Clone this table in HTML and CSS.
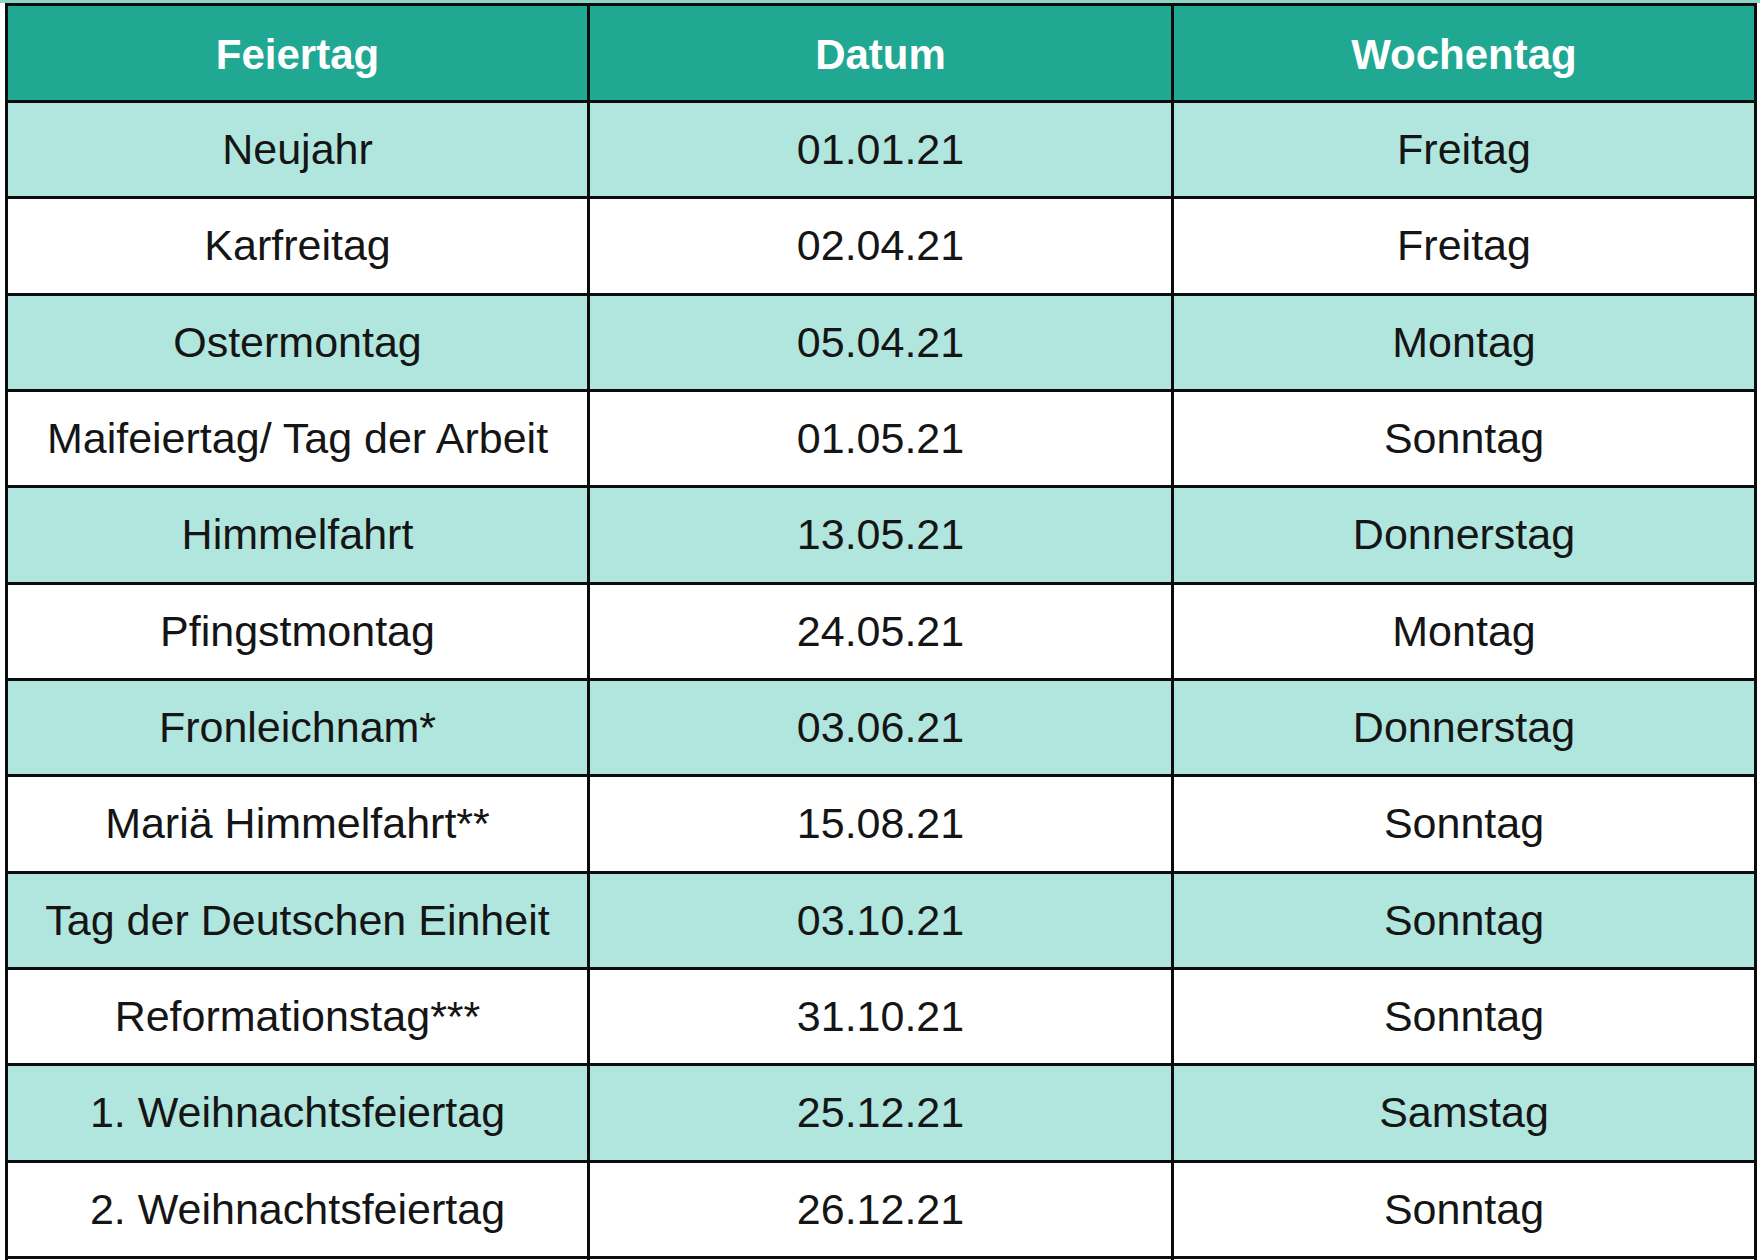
FILE: index.html
```html
<!DOCTYPE html>
<html lang="de">
<head>
<meta charset="utf-8">
<title>Feiertage 2021</title>
<link rel="stylesheet" href="styles.css">
</head>
<body>
<div class="top-strip"></div>
<table class="holidays">
  <colgroup>
    <col class="c1"><col class="c2"><col class="c3">
  </colgroup>
  <thead>
    <tr><th>Feiertag</th><th>Datum</th><th>Wochentag</th></tr>
  </thead>
  <tbody>
    <tr class="alt"><td>Neujahr</td><td>01.01.21</td><td>Freitag</td></tr>
    <tr><td>Karfreitag</td><td>02.04.21</td><td>Freitag</td></tr>
    <tr class="alt"><td>Ostermontag</td><td>05.04.21</td><td>Montag</td></tr>
    <tr><td>Maifeiertag/ Tag der Arbeit</td><td>01.05.21</td><td>Sonntag</td></tr>
    <tr class="alt"><td>Himmelfahrt</td><td>13.05.21</td><td>Donnerstag</td></tr>
    <tr><td>Pfingstmontag</td><td>24.05.21</td><td>Montag</td></tr>
    <tr class="alt"><td>Fronleichnam*</td><td>03.06.21</td><td>Donnerstag</td></tr>
    <tr><td>Mariä Himmelfahrt**</td><td>15.08.21</td><td>Sonntag</td></tr>
    <tr class="alt"><td>Tag der Deutschen Einheit</td><td>03.10.21</td><td>Sonntag</td></tr>
    <tr><td>Reformationstag***</td><td>31.10.21</td><td>Sonntag</td></tr>
    <tr class="alt"><td>1. Weihnachtsfeiertag</td><td>25.12.21</td><td>Samstag</td></tr>
    <tr><td>2. Weihnachtsfeiertag</td><td>26.12.21</td><td>Sonntag</td></tr>
    <tr class="blank"><td></td><td></td><td></td></tr>
  </tbody>
</table>
</body>
</html>
```
FILE: styles.css
```css
html, body {
  margin: 0;
  padding: 0;
  background: #ffffff;
}

body {
  font-family: "Liberation Sans", Arial, sans-serif;
  overflow: hidden;
}

.top-strip {
  height: 3px;
  background: #8ed4c7;
}

.holidays {
  margin-left: 5px;
  border-collapse: separate;
  border-spacing: 0;
  table-layout: fixed;
  width: 1752px;
  border-left: 3px solid #0c0c0c;
  border-top: 3px solid #0c0c0c;
}

.c1 { width: 582px; }
.c2 { width: 584px; }
.c3 { width: 583px; }

.holidays th,
.holidays td {
  border-right: 3px solid #0c0c0c;
  border-bottom: 3px solid #0c0c0c;
  padding: 0;
  text-align: center;
  vertical-align: middle;
  white-space: nowrap;
}

.holidays th {
  height: 90px;
  padding-top: 4px;
  background: #21a892;
  color: #ffffff;
  font-weight: bold;
  font-size: 42px;
}

.holidays td {
  height: 93.33px;
  color: #151515;
  font-size: 43px;
  background: #ffffff;
}

.holidays tr.alt td {
  background: #b1e6de;
}

.holidays tr.blank td {
  height: 40px;
}
```
